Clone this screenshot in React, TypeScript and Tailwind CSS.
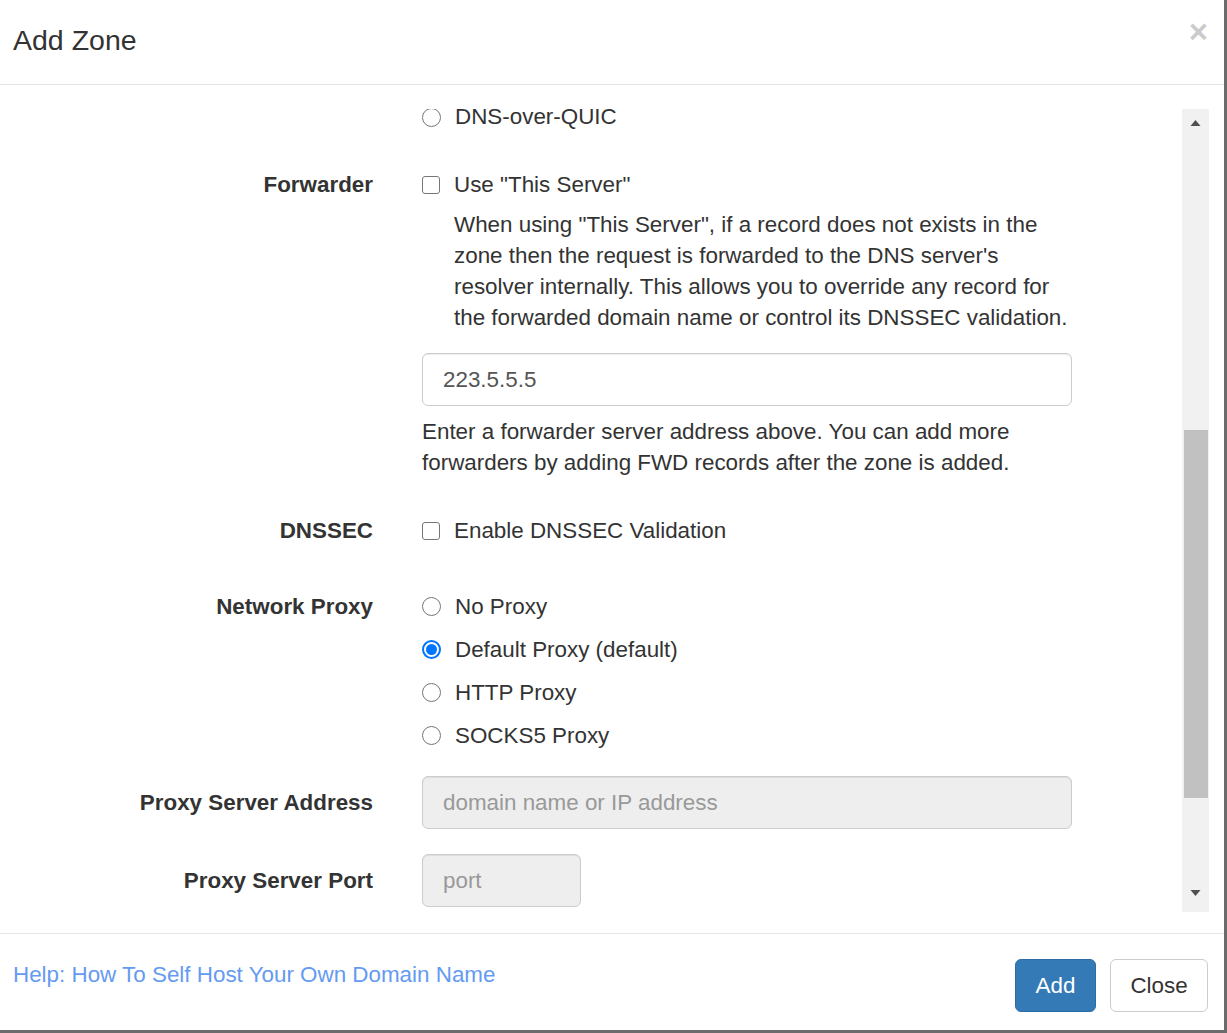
import React from "react";

// small form controls drawn by hand so they match the old bootstrap look
function Radio({ checked = false }: { checked?: boolean }) {
  return (
    <span className="inline-flex h-[19px] w-[19px] shrink-0 items-center justify-center rounded-full border-[1.5px] border-[#767676] bg-white"
      style={checked ? { borderColor: "#0075ff", borderWidth: 2 } : undefined}>
      {checked && <span className="h-[11px] w-[11px] rounded-full bg-[#0075ff]" />}
    </span>
  );
}

function Checkbox() {
  return <span className="inline-block h-[18px] w-[18px] shrink-0 rounded-[3px] border-[1.5px] border-[#767676] bg-white" />;
}

function Option({ kind, label, checked }: { kind: "radio" | "check"; label: string; checked?: boolean }) {
  return (
    <label className="flex h-[31px] items-center gap-[14px]">
      {kind === "radio" ? <Radio checked={checked} /> : <Checkbox />}
      <span className="whitespace-nowrap">{label}</span>
    </label>
  );
}

function Label({ children, center = false }: { children?: React.ReactNode; center?: boolean }) {
  return (
    <div className={`text-right font-bold leading-[31px] whitespace-nowrap ${center ? "flex h-[53px] items-center justify-end" : ""}`}>
      {children}
    </div>
  );
}

function Scrollbar() {
  return (
    <div className="relative h-[803px] w-[27px] shrink-0 bg-[#f1f1f1]">
      <svg className="absolute left-[8px] top-[10px]" width="11" height="8" viewBox="0 0 11 8">
        <path d="M5.5 1 L10.5 7 L0.5 7 Z" fill="#505050" />
      </svg>
      <div className="absolute left-[2px] top-[321px] h-[368px] w-[24px] bg-[#c1c1c1]" />
      <svg className="absolute left-[8px] top-[780px]" width="11" height="8" viewBox="0 0 11 8">
        <path d="M0.5 1 L10.5 1 L5.5 7 Z" fill="#505050" />
      </svg>
    </div>
  );
}

export default function App() {
  return (
    <div className="h-[1033px] w-[1227px] overflow-hidden bg-white text-[22.4px] text-[#333]"
      style={{ fontFamily: '"Liberation Sans", Arial, sans-serif' }}>
      <div className="flex h-full flex-col border-r-[3px] border-b-[3px] border-[#6b6b6b]">
        {/* header */}
        <div className="relative flex h-[85px] shrink-0 items-center border-b border-[#e5e5e5] pl-[13px]">
          <h4 className="-mt-[3px] text-[28.5px] leading-none font-normal">Add Zone</h4>
          <button className="absolute right-[16px] top-[15px] text-[33px] font-bold leading-none text-black opacity-20">×</button>
        </div>

        {/* body */}
        <div className="flex h-[848px] shrink-0 pl-[24px] pr-[15px] pt-[24px]">
          <div className="h-[803px] flex-1 overflow-hidden">
            <div className="grid grid-cols-[349px_650px] gap-x-[49px]">
              <Label />
              <div className="flex h-[24px] items-start gap-[14px]">
                <span className="-mt-[1px] flex"><Radio /></span>
                <span className="whitespace-nowrap leading-[16px]">DNS-over-QUIC</span>
              </div>

              <div className="col-span-2 h-[36px]" />
              <Label>Forwarder</Label>
              <div>
                <Option kind="check" label={'Use "This Server"'} />
                <p className="mt-[9px] pl-[32px] leading-[31px] whitespace-nowrap">
                  When using "This Server", if a record does not exists in the<br />
                  zone then the request is forwarded to the DNS server's<br />
                  resolver internally. This allows you to override any record for<br />
                  the forwarded domain name or control its DNSSEC validation.
                </p>
                <input
                  className="mt-[20px] block h-[53px] w-full rounded-[6px] border border-[#ccc] px-[20px] text-[22.4px] text-[#555] shadow-[inset_0_1px_1px_rgba(0,0,0,0.075)] outline-none"
                  defaultValue="223.5.5.5"
                />
                <p className="mt-[10px] leading-[31px] whitespace-nowrap">
                  Enter a forwarder server address above. You can add more<br />
                  forwarders by adding FWD records after the zone is added.
                </p>
              </div>

              <div className="col-span-2 h-[37px]" />
              <Label>DNSSEC</Label>
              <div>
                <Option kind="check" label="Enable DNSSEC Validation" />
              </div>

              <div className="col-span-2 h-[45px]" />
              <Label>Network Proxy</Label>
              <div className="flex flex-col gap-[12px]">
                <Option kind="radio" label="No Proxy" />
                <Option kind="radio" label="Default Proxy (default)" checked />
                <Option kind="radio" label="HTTP Proxy" />
                <Option kind="radio" label="SOCKS5 Proxy" />
              </div>

              <div className="col-span-2 h-[25px]" />
              <Label center>Proxy Server Address</Label>
              <div>
                <input
                  disabled
                  placeholder="domain name or IP address"
                  className="block h-[53px] w-full rounded-[6px] border border-[#ccc] bg-[#eee] px-[20px] text-[22.4px] text-[#555] placeholder:text-[#999] shadow-[inset_0_1px_1px_rgba(0,0,0,0.075)]"
                />
              </div>

              <div className="col-span-2 h-[25px]" />
              <Label center>Proxy Server Port</Label>
              <div>
                <input
                  disabled
                  placeholder="port"
                  className="block h-[53px] w-[159px] rounded-[6px] border border-[#ccc] bg-[#eee] px-[20px] text-[22.4px] text-[#555] placeholder:text-[#999] shadow-[inset_0_1px_1px_rgba(0,0,0,0.075)]"
                />
              </div>
              <div className="col-span-2 h-[40px]" />
            </div>
          </div>
          <Scrollbar />
        </div>

        {/* footer */}
        <div className="flex flex-1 items-start justify-between border-t border-[#e5e5e5] pl-[13px] pr-[16px]">
          <a href="#" className="mt-[25px] leading-[31px] text-[#659af2]">Help: How To Self Host Your Own Domain Name</a>
          <div className="mt-[25px] flex gap-[14px]">
            <button className="h-[53px] w-[81px] rounded-[6px] border border-[#2e6da4] bg-[#337ab7] text-white">Add</button>
            <button className="h-[53px] w-[98px] rounded-[6px] border border-[#ccc] bg-white text-[#333]">Close</button>
          </div>
        </div>
      </div>
    </div>
  );
}
